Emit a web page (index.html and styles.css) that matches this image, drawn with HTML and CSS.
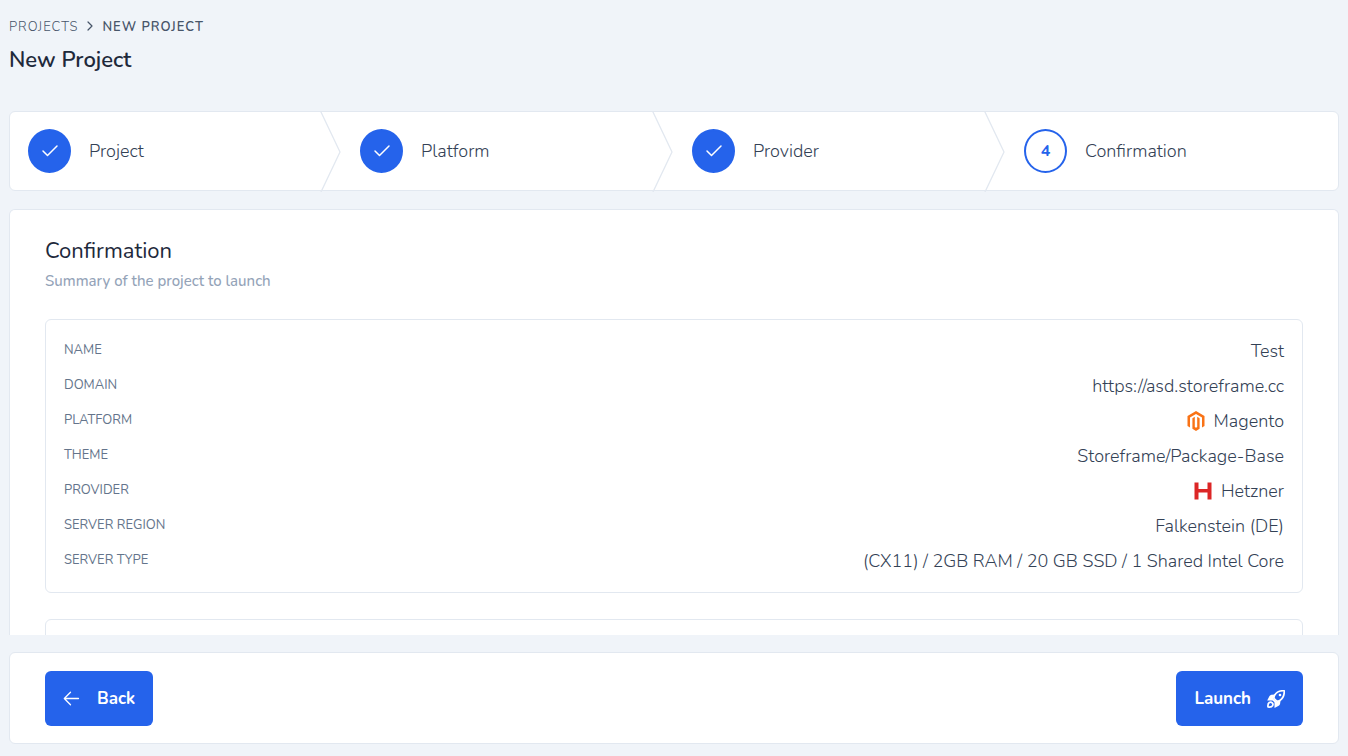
FILE: index.html
```html
<!DOCTYPE html>
<html lang="en">

<head>
    <meta charset="utf-8">
    <meta name="viewport" content="width=device-width, initial-scale=1">
    <title>New Project</title>
    <link rel="stylesheet" href="styles.css">
</head>

<body>
    <header class="page-header">
        <nav class="breadcrumbs" aria-label="Breadcrumb">
            <a href="#">Projects</a>
            <svg width="8" height="12" viewBox="0 0 8 12" fill="none" stroke="currentColor" stroke-width="1.2" stroke-linecap="round" stroke-linejoin="round" aria-hidden="true">
                <path d="M2 1 6 5 2 9" />
            </svg>
            <a href="#" class="current" aria-current="page">New Project</a>
        </nav>
        <h1>New Project</h1>
    </header>

    <nav aria-label="Progress">
        <ol class="steps">
            <li class="step">
                <a href="#">
                    <span class="step-icon done">
                        <svg width="18" height="18" viewBox="0 0 18 18" fill="none" stroke="currentColor" stroke-width="1.5" stroke-linecap="round" stroke-linejoin="round" aria-hidden="true">
                            <path d="M2 9 6.5 13.5 16 4" />
                        </svg>
                    </span>
                    <span>Project</span>
                </a>
                <svg class="step-arrow" viewBox="0 0 22 80" fill="none" preserveAspectRatio="none" aria-hidden="true">
                    <path d="M.5 -1 20 40 .5 81" stroke="currentColor" stroke-width="1.3" vector-effect="non-scaling-stroke" stroke-linejoin="round" />
                </svg>
            </li>
            <li class="step">
                <a href="#">
                    <span class="step-icon done">
                        <svg width="18" height="18" viewBox="0 0 18 18" fill="none" stroke="currentColor" stroke-width="1.5" stroke-linecap="round" stroke-linejoin="round" aria-hidden="true">
                            <path d="M2 9 6.5 13.5 16 4" />
                        </svg>
                    </span>
                    <span>Platform</span>
                </a>
                <svg class="step-arrow" viewBox="0 0 22 80" fill="none" preserveAspectRatio="none" aria-hidden="true">
                    <path d="M.5 -1 20 40 .5 81" stroke="currentColor" stroke-width="1.3" vector-effect="non-scaling-stroke" stroke-linejoin="round" />
                </svg>
            </li>
            <li class="step">
                <a href="#">
                    <span class="step-icon done">
                        <svg width="18" height="18" viewBox="0 0 18 18" fill="none" stroke="currentColor" stroke-width="1.5" stroke-linecap="round" stroke-linejoin="round" aria-hidden="true">
                            <path d="M2 9 6.5 13.5 16 4" />
                        </svg>
                    </span>
                    <span>Provider</span>
                </a>
                <svg class="step-arrow" viewBox="0 0 22 80" fill="none" preserveAspectRatio="none" aria-hidden="true">
                    <path d="M.5 -1 20 40 .5 81" stroke="currentColor" stroke-width="1.3" vector-effect="non-scaling-stroke" stroke-linejoin="round" />
                </svg>
            </li>
            <li class="step">
                <a href="#" aria-current="step">
                    <span class="step-icon">4</span>
                    <span>Confirmation</span>
                </a>
            </li>
        </ol>
    </nav>

    <main class="panel">
        <h2>Confirmation</h2>
        <p class="subtitle">Summary of the project to launch</p>

        <dl class="summary">
            <div class="row">
                <dt>Name</dt>
                <dd>Test</dd>
            </div>
            <div class="row">
                <dt>Domain</dt>
                <dd>https://asd.storeframe.cc</dd>
            </div>
            <div class="row">
                <dt>Platform</dt>
                <dd>
                    <svg width="18" height="20" viewBox="0 0 18 20" fill="#f97316" aria-hidden="true">
                        <path d="M9 0 17.5 5V15L15 16.4V6.4L9 2.9 3 6.4V16.4L.5 15V5Z" />
                        <path d="M5.4 7.2 7.8 5.8V16L9 16.7 10.2 16V5.8L12.6 7.2V17.7L9 20 5.4 17.7Z" />
                    </svg>
                    Magento
                </dd>
            </div>
            <div class="row">
                <dt>Theme</dt>
                <dd>Storeframe/Package-Base</dd>
            </div>
            <div class="row">
                <dt>Provider</dt>
                <dd>
                    <svg width="18" height="18" viewBox="0 0 18 18" fill="#dc2626" aria-hidden="true">
                        <path d="M.5 .5H4.5V7H13.5V.5H17.5V17.5H13.5V10.5H4.5V17.5H.5Z" />
                    </svg>
                    Hetzner
                </dd>
            </div>
            <div class="row">
                <dt>Server region</dt>
                <dd>Falkenstein (DE)</dd>
            </div>
            <div class="row">
                <dt>Server type</dt>
                <dd>(CX11) / 2GB RAM / 20 GB SSD / 1 Shared Intel Core</dd>
            </div>
        </dl>

        <div class="summary"></div>
    </main>

    <footer class="actions">
        <button type="button">
            <svg width="18" height="18" viewBox="0 0 18 18" fill="none" stroke="currentColor" stroke-width="1.3" stroke-linecap="round" stroke-linejoin="round" aria-hidden="true">
                <path d="M15.5 8.5H2M7.5 2.3 1.3 8.5 7.5 14.7" />
            </svg>
            Back
        </button>
        <button type="button">
            Launch
            <svg width="18" height="18" viewBox="0 0 18 18" fill="none" stroke="currentColor" stroke-width="1.7" stroke-linejoin="round" aria-hidden="true">
                <path d="M17.2 .8C12.5 .5 9.5 2 7.6 5.2 6.9 6.4 6.8 7.5 7.1 8.5L9.5 10.9C10.5 11.2 11.6 11.1 12.8 10.4 16 8.5 17.5 5.5 17.2 .8Z" />
                <path fill="currentColor" stroke="none" d="M8.2 4.4 4.5 4.8C3.6 5 3 5.4 2.5 6.1L.2 10.5H5.2C6 10.6 7.4 12 7.5 12.8V18L11.7 15.7C12.4 15.2 12.9 14.6 13.1 13.7L13.6 9.8 9.3 11.6 6.4 8.7Z" />
                <circle cx="13" cy="5" r="1.3" fill="currentColor" stroke="none" />
                <path d="M1 17C.7 14.8 1.2 13.3 2.3 12.5 3.3 11.8 4.4 12 5.2 12.8 6 13.6 6.2 14.7 5.5 15.7 4.7 16.8 3.2 17.3 1 17Z" />
            </svg>
        </button>
    </footer>
</body>

</html>
```

FILE: styles.css
```css
* {
    box-sizing: border-box;
}

body {
    font-family: Nunito, "Open Sans", "Noto Sans", sans-serif;
    font-size: 18px;
    font-weight: 300;
    line-height: 26px;
    margin: 0;
    padding: 17px 9px 12px;
    display: flex;
    flex-direction: column;
    height: 100vh;
    background: #f0f4f9;
    color: #334155;
}

h1,
h2,
p,
dl,
dd,
ol {
    margin: 0;
    padding: 0;
}

a {
    color: inherit;
    text-decoration: none;
}

svg {
    flex-shrink: 0;
}

.page-header {
    margin-bottom: 35px;
}

.breadcrumbs {
    display: flex;
    align-items: center;
    gap: 8px;
    margin-bottom: 8px;
    font-size: 13px;
    line-height: 20px;
    letter-spacing: 1px;
    text-transform: uppercase;
    color: #475569;
}

.breadcrumbs .current {
    font-weight: 600;
}

h1 {
    font-size: 22px;
    font-weight: 600;
    line-height: 31px;
    color: #1e293b;
}

.steps,
.panel,
.actions {
    background: #fff;
    border: 1px solid #e2e8f0;
    border-radius: 6px;
}

.steps {
    display: grid;
    grid-template-columns: repeat(4, 1fr);
    height: 80px;
    list-style: none;
}

.step {
    display: flex;
    justify-content: space-between;
}

.step a {
    display: flex;
    align-items: center;
    gap: 18px;
    padding: 0 0 2px 18px;
}

.step-icon {
    display: flex;
    align-items: center;
    justify-content: center;
    width: 43px;
    height: 44px;
    border: 2px solid #2563eb;
    border-radius: 50%;
    font-size: 16px;
    font-weight: 700;
    color: #2563eb;
}

.step-icon.done {
    background: #2563eb;
    color: #fff;
}

.step-arrow {
    width: 22px;
    height: 100%;
    color: #e2e8f0;
}

.panel {
    flex: 1;
    min-height: 0;
    margin-top: 18px;
    padding: 27px 35px;
    border-bottom: 0;
    border-radius: 6px 6px 0 0;
    overflow-y: auto;
    scrollbar-width: none;
}

h2 {
    font-size: 22px;
    font-weight: 400;
    line-height: 28px;
    color: #1e293b;
}

.subtitle {
    margin-top: 3px;
    font-size: 15px;
    font-weight: 500;
    color: #94a3b8;
}

.summary {
    min-height: 80px;
    margin: 25px 0 26px;
    padding: 18px;
    border: 1px solid #e2e8f0;
    border-radius: 6px;
}

.row {
    display: flex;
    justify-content: space-between;
    margin-bottom: 9px;
}

.row:last-child {
    margin-bottom: 0;
}

dt {
    font-size: 13px;
    font-weight: 400;
    line-height: 24px;
    text-transform: uppercase;
    color: #64748b;
}

dd {
    display: flex;
    align-items: center;
    gap: 9px;
}

.actions {
    display: flex;
    justify-content: space-between;
    margin-top: 17px;
    padding: 18px 35px 17px;
}

button {
    display: flex;
    align-items: center;
    gap: 16px;
    height: 55px;
    padding: 0 18px;
    border: none;
    border-radius: 6px;
    font: inherit;
    font-size: 17px;
    font-weight: 700;
    background: #2563eb;
    color: #fff;
    cursor: pointer;
}

button:hover {
    background: #1d4ed8;
}
```
